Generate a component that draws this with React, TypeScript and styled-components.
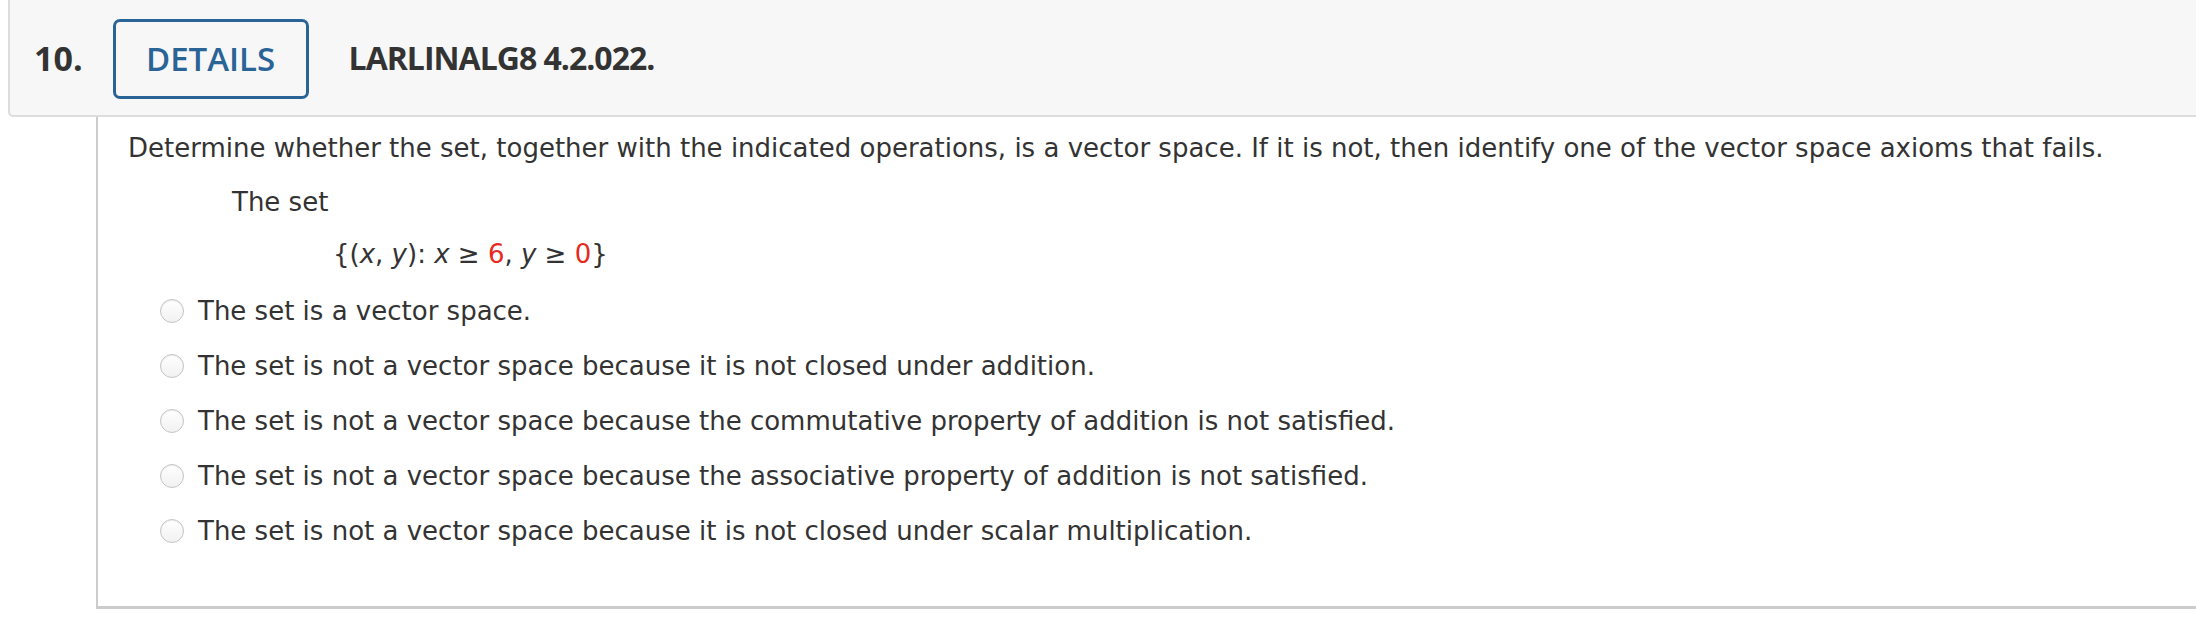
import React from "react";
import styled, { createGlobalStyle } from "styled-components";

const GlobalStyle = createGlobalStyle`
  html, body {
    margin: 0;
    padding: 0;
    background: #ffffff;
  }
  body {
    font-family: "DejaVu Sans", Verdana, sans-serif;
    color: #333333;
  }
`;

const Page = styled.div`
  width: 100%;
  overflow: hidden;
`;

const Header = styled.div`
  display: flex;
  align-items: center;
  height: 113px;
  margin: -4px -40px 0 8px;
  padding: 4px 0 0 24px;
  box-sizing: content-box;
  background: #f7f7f7;
  border: 2px solid #dddddd;
  border-radius: 5px;
  font-family: "Open Sans", "Liberation Sans", sans-serif;
  color: #333333;
`;

const Number = styled.span`
  font-size: 34px;
  font-weight: 700;
  margin-top: -2px;
`;

const DetailsButton = styled.button`
  width: 196px;
  height: 80px;
  margin-left: 30px;
  box-sizing: border-box;
  background: transparent;
  border: 3px solid #2a6496;
  border-radius: 7px;
  color: #2a6496;
  font-family: "Open Sans", "Liberation Sans", sans-serif;
  font-size: 33px;
  font-weight: 600;
  padding: 0;
  cursor: pointer;
`;

const Title = styled.span`
  margin-left: 40px;
  font-size: 32px;
  font-weight: 700;
  letter-spacing: -1px;
  margin-top: -2px;
`;

const Body = styled.div`
  margin: 0 -40px 0 96px;
  padding: 4px 0 48px 30px;
  border-left: 2px solid #cccccc;
  border-bottom: 3px solid #cccccc;
  font-size: 26px;
`;

const Line = styled.div<{ indent?: number; height?: number }>`
  line-height: ${(p) => p.height ?? 54}px;
  padding-left: ${(p) => p.indent ?? 0}px;
  white-space: nowrap;
`;

const Var = styled.i`
  font-style: italic;
`;

const Red = styled.span`
  color: #e8291c;
`;

const Options = styled.div`
  display: flex;
  flex-direction: column;
  margin-top: 4px;
`;

const Option = styled.label`
  display: flex;
  align-items: center;
  height: 55px;
  padding-left: 32px;
  white-space: nowrap;
  cursor: pointer;
`;

const Radio = styled.span`
  width: 24px;
  height: 24px;
  box-sizing: border-box;
  border-radius: 50%;
  border: 1px solid #c4c4c4;
  background: linear-gradient(#ffffff, #f1f1f1);
  box-shadow: inset 0 1px 1px rgba(0, 0, 0, 0.08);
  margin: 0 14px 0 0;
  flex-shrink: 0;
`;

const OptionText = styled.span`
  line-height: 55px;
  margin-top: 2px;
`;

const options = [
  "The set is a vector space.",
  "The set is not a vector space because it is not closed under addition.",
  "The set is not a vector space because the commutative property of addition is not satisfied.",
  "The set is not a vector space because the associative property of addition is not satisfied.",
  "The set is not a vector space because it is not closed under scalar multiplication.",
];

export default function App() {
  return (
    <Page>
      <GlobalStyle />
      <Header>
        <Number>10.</Number>
        <DetailsButton>DETAILS</DetailsButton>
        <Title>LARLINALG8 4.2.022.</Title>
      </Header>
      <Body>
        <Line>
          Determine whether the set, together with the indicated operations, is
          a vector space. If it is not, then identify one of the vector space
          axioms that fails.
        </Line>
        <Line indent={104}>The set</Line>
        <Line indent={205} height={50}>
          {"{("}
          <Var>x</Var>, <Var>y</Var>): <Var>x</Var> ≥ <Red>6</Red>,{" "}
          <Var>y</Var> ≥ <Red>0</Red>
          {"}"}
        </Line>
        <Options>
          {options.map((text) => (
            <Option key={text}>
              <Radio />
              <OptionText>{text}</OptionText>
            </Option>
          ))}
        </Options>
      </Body>
    </Page>
  );
}
